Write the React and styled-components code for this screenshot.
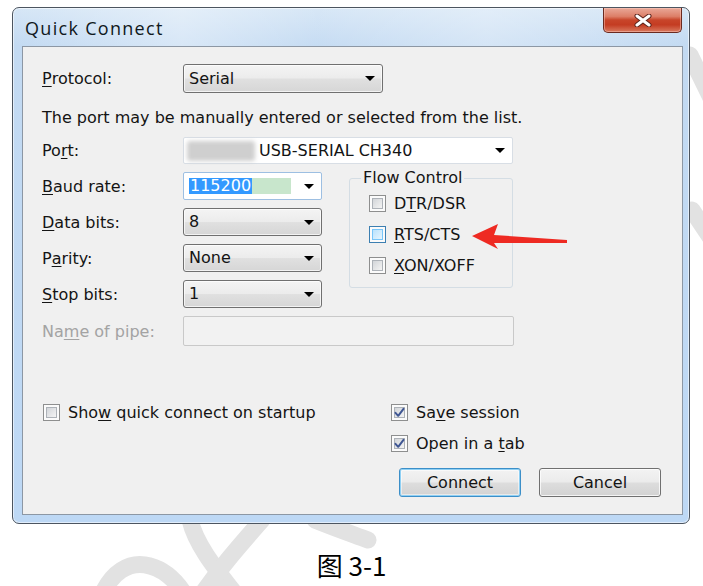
import React from 'react';
import styled, { createGlobalStyle, css } from 'styled-components';

const GlobalStyle = createGlobalStyle`
  html, body { margin: 0; padding: 0; background: #ffffff; }
  body { font-family: "DejaVu Sans", "Liberation Sans", sans-serif; }
  * { box-sizing: border-box; }
`;

const Page = styled.div`
  position: relative;
  width: 703px;
  height: 586px;
  overflow: hidden;
  padding: 7px 0 0 12px;
  background: #ffffff;
`;

const Overlay = styled.svg`
  position: absolute;
  left: 0;
  top: 0;
  width: 703px;
  height: 586px;
  z-index: ${p => p.$z};
  pointer-events: none;
`;

const Window = styled.div`
  position: relative;
  z-index: 1;
  width: 678px;
  height: 517px;
  border: 1px solid #4c5560;
  border-radius: 7px;
  padding: 0 6px 8px 9px;
  display: flex;
  flex-direction: column;
  background:
    linear-gradient(to right, rgba(255,255,255,0.0) 0%, rgba(255,255,255,0.35) 25%, rgba(255,255,255,0.05) 45%, rgba(255,255,255,0.3) 70%, rgba(255,255,255,0) 100%) top / 100% 38px no-repeat,
    linear-gradient(to bottom, #d6e6f6 0px, #c3daf2 38px, #bdd8f5 100%);
  box-shadow: inset 0 0 0 1px rgba(255,255,255,0.55);
`;

const TitleBar = styled.div`
  height: 38px;
  display: flex;
  justify-content: space-between;
  align-items: flex-start;
  flex: none;
`;

const TitleText = styled.div`
  margin: 9px 0 0 3px;
  font-family: "Open Sans", "DejaVu Sans", sans-serif;
  font-size: 18px;
  letter-spacing: 1.3px;
  line-height: 22px;
  color: #101820;
`;

const CloseButton = styled.div`
  width: 79px;
  height: 25px;
  margin-right: 1px;
  border: 1px solid #6a2a20;
  border-top: none;
  border-radius: 0 0 5px 5px;
  display: flex;
  align-items: center;
  justify-content: center;
  background: linear-gradient(to bottom, #e9a898 0%, #dd7f68 35%, #c8452a 50%, #c43c22 70%, #d97a5f 100%);
  box-shadow: inset 0 0 0 1px rgba(255,210,200,0.45);
`;

const Client = styled.div`
  flex: 1;
  border: 1px solid #8c97a4;
  background: #f0f0f0;
  padding: 17px 21px 0 19px;
  display: flex;
  flex-direction: column;
  color: #141414;
  font-size: 16px;
`;

const FormGrid = styled.div`
  display: grid;
  grid-template-columns: 141px 139px 27px 164px;
  grid-template-rows: 29px 28px 27px 28px 28px 28px 28px 30px;
  row-gap: 8px;
`;

const Label = styled.div`
  grid-column: 1;
  display: flex;
  align-items: center;
  white-space: nowrap;
  color: ${p => (p.$disabled ? '#a3a3a3' : '#141414')};
`;

const Note = styled.div`
  grid-column: 1 / -1;
  display: flex;
  align-items: center;
  padding-top: 4px;
  white-space: nowrap;
`;

const Key = styled.span`
  text-decoration: underline;
  text-underline-offset: 2px;
`;

const comboVariants = {
  button: css`
    border: 1px solid #707070;
    border-radius: 3px;
    background: linear-gradient(to bottom, #f4f4f4 0%, #ececec 48%, #e0e0e0 52%, #d6d6d6 100%);
    box-shadow: inset 0 0 0 1px rgba(255,255,255,0.7);
  `,
  edit: css`
    border: 1px solid #d8dee5;
    border-radius: 2px;
    background: #ffffff;
  `,
  focus: css`
    border: 1px solid #9dbfe2;
    border-radius: 2px;
    background: #ffffff;
  `,
  disabled: css`
    border: 1px solid #c9c9c9;
    border-radius: 2px;
    background: #f2f2f2;
  `,
};

const Combo = styled.div`
  grid-column: ${p => p.$span};
  width: ${p => p.$w}px;
  height: 100%;
  display: flex;
  align-items: center;
  padding: 0 7px 0 5px;
  ${p => comboVariants[p.$variant]}
`;

const Value = styled.div`
  flex: 1;
  display: flex;
  align-items: center;
  white-space: nowrap;
  line-height: 1;
`;

const DropArrow = styled.div`
  width: 0;
  height: 0;
  border-left: 5px solid transparent;
  border-right: 5px solid transparent;
  border-top: 5px solid #000000;
  flex: none;
`;

const Blurred = styled.div`
  width: 68px;
  height: 20px;
  margin: 0 4px 0 -2px;
  background: #cfcfcf;
  border-radius: 3px;
  filter: blur(2px);
`;

const Selected = styled.span`
  display: inline-flex;
  align-items: center;
  height: 16px;
  padding: 0 1px;
  background: #3399ff;
  color: #ffffff;
`;

const Composition = styled.span`
  display: inline-block;
  width: 39px;
  height: 16px;
  background: #c8e6cc;
`;

const Group = styled.fieldset`
  grid-column: 4;
  grid-row: 4 / span 4;
  align-self: start;
  margin: -3px 0 0 0;
  height: 119px;
  padding: 8px 0 0 19px;
  border: 1px solid #d4dde4;
  border-radius: 3px;
  min-width: 0;
  display: flex;
  flex-direction: column;
  gap: 14px;
`;

const Legend = styled.legend`
  margin-left: -8px;
  padding: 0 2px;
  line-height: 18px;
  font-size: 16px;
`;

const CheckRow = styled.label`
  display: flex;
  align-items: center;
  gap: 8px;
  height: 17px;
  white-space: nowrap;
  margin-left: ${p => p.$indent || 0}px;
`;

const Box = styled.span`
  position: relative;
  width: 17px;
  height: 17px;
  flex: none;
  border: 1px solid ${p => (p.$hot ? '#3c7fb1' : '#8e8f8f')};
  background: #fbfbfb;
  display: flex;
  align-items: center;
  justify-content: center;

  &::before {
    content: '';
    position: absolute;
    inset: 2px;
    border: 1px solid ${p => (p.$hot ? '#79c6f9' : '#adb2b8')};
    background: ${p =>
      p.$hot
        ? 'linear-gradient(135deg, #b9e2fd 0%, #e6f5fe 100%)'
        : 'linear-gradient(135deg, #d2d5d9 0%, #f4f4f4 100%)'};
  }

  & > svg {
    position: relative;
  }
`;

const Bottom = styled.div`
  margin-top: 58px;
  display: grid;
  grid-template-columns: 348px 1fr;
  grid-template-rows: 17px 17px;
  row-gap: 14px;
`;

const ButtonRow = styled.div`
  grid-column: 1 / -1;
  margin-top: 2px;
  display: flex;
  justify-content: flex-end;
  gap: 18px;
`;

const Button = styled.div`
  width: 122px;
  height: 29px;
  display: flex;
  align-items: center;
  justify-content: center;
  border-radius: 3px;
  border: 1px solid ${p => (p.$default ? '#3c8fc8' : '#707070')};
  background: linear-gradient(to bottom, #f3f3f3 0%, #ebebeb 48%, #dddddd 52%, #d2d2d2 100%);
  box-shadow: ${p =>
    p.$default
      ? 'inset 0 0 0 1px #8fd0f4, inset 0 0 0 2px rgba(255,255,255,0.5)'
      : 'inset 0 0 0 1px rgba(255,255,255,0.75)'};
  color: #141414;
`;

const Caption = styled.div`
  position: relative;
  z-index: 1;
  margin-top: 24px;
  margin-left: -12px;
  width: 703px;
  text-align: center;
  font-family: "Noto Sans CJK SC", "Noto Sans", sans-serif;
  font-size: 26px;
  line-height: 34px;
  color: #000000;
`;

const CheckMark = () => (
  <svg width="11" height="11" viewBox="0 0 11 11">
    <path d="M1.5 5.8 L4.2 8.8 L9.5 1.8" fill="none" stroke="#3f5693" strokeWidth="2" strokeLinecap="round" strokeLinejoin="round" />
  </svg>
);

const Check = ({ checked, hot, indent, children }) => (
  <CheckRow $indent={indent}>
    <Box $hot={hot}>{checked && <CheckMark />}</Box>
    <span>{children}</span>
  </CheckRow>
);

const CloseGlyph = () => (
  <svg width="18" height="13" viewBox="0 0 18 13">
    <path d="M3 2 L15 11 M15 2 L3 11" stroke="#5b231b" strokeWidth="5" strokeLinecap="round" />
    <path d="M3 2 L15 11 M15 2 L3 11" stroke="#ffffff" strokeWidth="3" strokeLinecap="round" />
  </svg>
);

export default function App() {
  return (
    <Page>
      <GlobalStyle />
      <Overlay $z={0} viewBox="0 0 703 586">
        <g fill="none" stroke="#e2e2e2" strokeWidth="17" strokeLinecap="round">
          <path d="M190 520 C 196 545, 215 568, 240 600" />
          <path d="M262 520 C 240 545, 218 570, 198 600" />
          <path d="M315 520 C 335 528, 352 534, 368 540" />
          <path d="M100 600 C 110 572, 130 560, 150 566 C 165 570, 178 582, 188 600" />
          <path d="M690 55 L 712 100" />
          <path d="M692 210 L 712 240" />
        </g>
      </Overlay>
      <Window>
        <TitleBar>
          <TitleText>Quick Connect</TitleText>
          <CloseButton>
            <CloseGlyph />
          </CloseButton>
        </TitleBar>
        <Client>
          <FormGrid>
            <Label><Key>P</Key>rotocol:</Label>
            <Combo $span="2 / span 3" $w={200} $variant="button">
              <Value>Serial</Value>
              <DropArrow />
            </Combo>

            <Note>The port may be manually entered or selected from the list.</Note>

            <Label>Po<Key>r</Key>t:</Label>
            <Combo $span="2 / span 3" $w={330} $variant="edit">
              <Value>
                <Blurred />
                USB-SERIAL CH340
              </Value>
              <DropArrow />
            </Combo>

            <Label><Key>B</Key>aud rate:</Label>
            <Combo $span="2" $w={139} $variant="focus">
              <Value>
                <Selected>115200</Selected>
                <Composition />
              </Value>
              <DropArrow />
            </Combo>

            <Group>
              <Legend>Flow Control</Legend>
              <Check>D<Key>T</Key>R/DSR</Check>
              <Check hot><Key>R</Key>TS/CTS</Check>
              <Check><Key>X</Key>ON/XOFF</Check>
            </Group>

            <Label><Key>D</Key>ata bits:</Label>
            <Combo $span="2" $w={139} $variant="button">
              <Value>8</Value>
              <DropArrow />
            </Combo>

            <Label>P<Key>a</Key>rity:</Label>
            <Combo $span="2" $w={139} $variant="button">
              <Value>None</Value>
              <DropArrow />
            </Combo>

            <Label><Key>S</Key>top bits:</Label>
            <Combo $span="2" $w={139} $variant="button">
              <Value>1</Value>
              <DropArrow />
            </Combo>

            <Label $disabled>Na<Key>m</Key>e of pipe:</Label>
            <Combo $span="2 / span 3" $w={331} $variant="disabled">
              <Value />
            </Combo>
          </FormGrid>

          <Bottom>
            <Check indent={1}>Sho<Key>w</Key> quick connect on startup</Check>
            <Check checked indent={1}>Sa<Key>v</Key>e session</Check>
            <span />
            <Check checked indent={1}>Open in a <Key>t</Key>ab</Check>
            <ButtonRow>
              <Button $default>Connect</Button>
              <Button>Cancel</Button>
            </ButtonRow>
          </Bottom>
        </Client>
      </Window>
      <Caption>图 3-1</Caption>
      <Overlay $z={2} viewBox="0 0 703 586">
        <path d="M472 236 L498 224 L494 235 L567 240 L567 243 L494 243 L498 249 Z" fill="#ee2a22" />
      </Overlay>
    </Page>
  );
}
